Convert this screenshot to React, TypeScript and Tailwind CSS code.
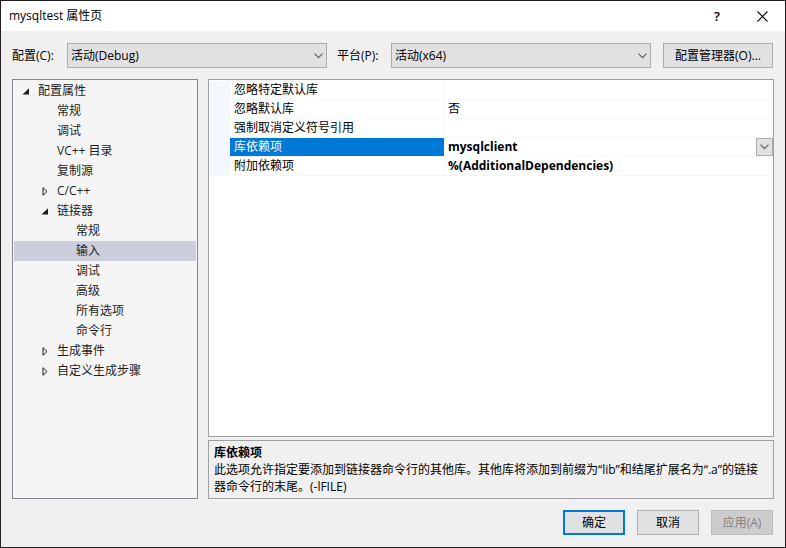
import { useState } from "react";

type TreeNode = {
  label: string;
  level: 0 | 1 | 2;
  state?: "open" | "closed";
};

const treeNodes: TreeNode[] = [
  { label: "配置属性", level: 0, state: "open" },
  { label: "常规", level: 1 },
  { label: "调试", level: 1 },
  { label: "VC++ 目录", level: 1 },
  { label: "复制源", level: 1 },
  { label: "C/C++", level: 1, state: "closed" },
  { label: "链接器", level: 1, state: "open" },
  { label: "常规", level: 2 },
  { label: "输入", level: 2 },
  { label: "调试", level: 2 },
  { label: "高级", level: 2 },
  { label: "所有选项", level: 2 },
  { label: "命令行", level: 2 },
  { label: "生成事件", level: 1, state: "closed" },
  { label: "自定义生成步骤", level: 1, state: "closed" },
];

const indent = { 0: "pl-2", 1: "pl-[27px]", 2: "pl-[46px]" };

const properties = [
  { name: "忽略特定默认库", value: "" },
  { name: "忽略默认库", value: "否" },
  { name: "强制取消定义符号引用", value: "" },
  { name: "库依赖项", value: "mysqlclient" },
  { name: "附加依赖项", value: "%(AdditionalDependencies)" },
];

function Chevron() {
  return (
    <svg width="9" height="6" viewBox="0 0 9 6" fill="none" stroke="#606060" strokeWidth="1.2" aria-hidden="true">
      <path d="M0.5 0.7 4.5 4.7 8.5 0.7" />
    </svg>
  );
}

function Expander({ state }: { state?: "open" | "closed" }) {
  return (
    <svg width="8" height="9" viewBox="0 0 8 9" className="mr-2 shrink-0" aria-hidden="true">
      {state === "open" && <path d="M7 1.2V7.5H0.5Z" fill="#1e1e1e" />}
      {state === "closed" && <path d="M2 0.7V8.3L6 4.5Z" fill="none" stroke="#1e1e1e" />}
    </svg>
  );
}

function Combo({ id, value }: { id: string; value: string }) {
  return (
    <div className="relative h-[25px] min-w-0 flex-1">
      <select id={id} className="block h-full w-full appearance-none border border-[#adadad] bg-[#e1e1e1] px-[3px] outline-none">
        <option>{value}</option>
      </select>
      <span className="pointer-events-none absolute inset-y-0 right-1 flex items-center">
        <Chevron />
      </span>
    </div>
  );
}

export default function App() {
  const [selected, setSelected] = useState(8);
  const [library, setLibrary] = useState("mysqlclient");

  return (
    <div className="flex h-screen flex-col border border-[#231f20] bg-[#f0f0f0] font-['Open_Sans','Noto_Sans_CJK_SC',sans-serif] text-[12px] leading-4 text-black">
      <header className="flex h-[30px] shrink-0 items-center bg-white pr-[17px] pl-2">
        <h1 className="flex-1">mysqltest 属性页</h1>
        <button aria-label="帮助" className="mr-[34px] w-3 text-[13px] font-semibold">?</button>
        <button aria-label="关闭">
          <svg width="11" height="11" viewBox="0 0 11 11" stroke="black" strokeWidth="1.1" aria-hidden="true">
            <path d="M0.5 0.5 10.5 10.5M10.5 0.5 0.5 10.5" />
          </svg>
        </button>
      </header>

      <div className="flex shrink-0 items-center pt-3 pr-3 pb-[11px] pl-[11px]">
        <label htmlFor="configuration" className="w-[55px] shrink-0">配置(C):</label>
        <Combo id="configuration" value="活动(Debug)" />
        <label htmlFor="platform" className="ml-2.5 w-[54px] shrink-0">平台(P):</label>
        <Combo id="platform" value="活动(x64)" />
        <button className="ml-3 h-[25px] w-[110px] shrink-0 border border-[#adadad] bg-[#e1e1e1]">配置管理器(O)...</button>
      </div>

      <main className="flex min-h-0 flex-1 gap-2.5 px-[11px]">
        <ul role="tree" aria-label="配置属性" className="w-[186px] shrink-0 border border-[#828790] bg-[#f5f5f5] p-px text-[#1e1e1e]">
          {treeNodes.map((node, index) => (
            <li key={index} role="treeitem" aria-level={node.level + 1} aria-selected={index === selected}>
              <button
                onClick={() => setSelected(index)}
                className={`flex h-5 w-full items-center text-left ${indent[node.level]} ${index === selected ? "bg-[#cccedb]" : ""}`}
              >
                <Expander state={node.state} />
                {node.label}
              </button>
            </li>
          ))}
        </ul>

        <div className="flex min-w-0 flex-1 flex-col gap-[3px]">
          <div className="min-h-0 flex-1 border border-[#a0a0a0] bg-white pt-px">
            <table className="w-full table-fixed border-separate border-spacing-0">
              <colgroup>
                <col className="w-[21px]" />
                <col className="w-[215px]" />
                <col />
              </colgroup>
              <tbody>
                {properties.map((property) => {
                  const active = property.name === "库依赖项";
                  return (
                    <tr key={property.name} className="h-[19px]">
                      <td className="bg-[#f4f7fc] p-0" />
                      <th
                        scope="row"
                        className={`border-r border-b border-[#f4f7fc] p-0 pl-1 text-left font-normal ${active ? "bg-[#0078d7] bg-clip-padding text-white" : ""}`}
                      >
                        {property.name}
                      </th>
                      <td className="h-[19px] border-b border-[#f4f7fc] p-0">
                        {active ? (
                          <div className="flex h-[18px]">
                            <input
                              aria-label={property.name}
                              value={library}
                              onChange={(event) => setLibrary(event.target.value)}
                              className="min-w-0 flex-1 bg-transparent pl-[3px] font-bold outline-none"
                            />
                            <button aria-label="展开" className="flex w-[17px] items-center justify-center border border-[#adadad] bg-[#e1e1e1]">
                              <Chevron />
                            </button>
                          </div>
                        ) : (
                          <div className={`pl-[3px] ${property.value.startsWith("%") ? "font-bold" : ""}`}>{property.value}</div>
                        )}
                      </td>
                    </tr>
                  );
                })}
              </tbody>
            </table>
          </div>
          <section className="h-[59px] shrink-0 border border-[#a0a0a0] px-[5px] pt-[3px] leading-[17px]">
            <h2 className="font-bold">库依赖项</h2>
            <p>此选项允许指定要添加到链接器命令行的其他库。其他库将添加到前缀为“lib”和结尾扩展名为“.a”的链接器命令行的末尾。(-lFILE)</p>
          </section>
        </div>
      </main>

      <footer className="flex shrink-0 justify-end gap-3 pt-[11px] pr-3 pb-3">
        <button className="h-[25px] w-[62px] border-2 border-[#0078d7] bg-[#e1e1e1]">确定</button>
        <button className="h-[25px] w-[62px] border border-[#adadad] bg-[#e1e1e1]">取消</button>
        <button disabled className="h-[25px] w-[62px] border border-[#bfbfbf] bg-[#cccccc] text-[#838383]">应用(A)</button>
      </footer>
    </div>
  );
}
